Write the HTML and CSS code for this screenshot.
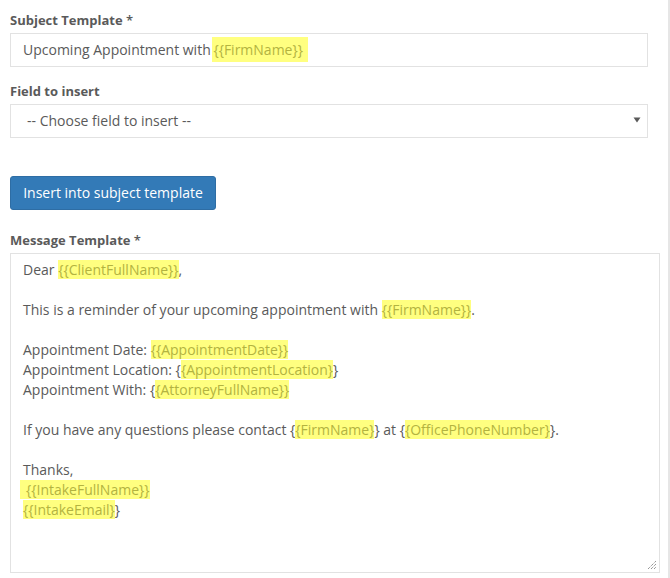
FILE: index.html
```html
<!DOCTYPE html>
<html lang="en">
<head>
<meta charset="utf-8">
<title>Template editor</title>
<link rel="stylesheet" href="styles.css">
</head>
<body>
<div class="page">
  <div class="form-group">
    <label class="label">Subject Template <span class="req">*</span></label>
    <div class="input"><span class="value">Upcoming Appointment with <span class="hl hl-subject">{{FirmName}}</span></span></div>
  </div>
  <div class="form-group">
    <label class="label">Field to insert</label>
    <div class="select">
      <span>-- Choose field to insert --</span>
      <svg class="caret" width="8" height="6" viewBox="0 0 8 6"><path d="M0.5 0.5 H7.5 L4 5.5 Z" fill="#5a5a5a"/></svg>
    </div>
  </div>
  <div class="actions">
    <button class="btn">Insert into subject template</button>
  </div>
  <div class="form-group">
    <label class="label">Message Template <span class="req">*</span></label>
    <div class="textarea">
      <div class="line">Dear <span class="hl">{{ClientFullName}}</span>,</div>
      <div class="line">&nbsp;</div>
      <div class="line">This is a reminder of your upcoming appointment with <span class="hl">{{FirmName}}</span>.</div>
      <div class="line">&nbsp;</div>
      <div class="line">Appointment Date: <span class="hl">{{AppointmentDate}}</span></div>
      <div class="line">Appointment Location: {<span class="hl">{AppointmentLocation}</span>}</div>
      <div class="line">Appointment With: {<span class="hl">{AttorneyFullName}}</span></div>
      <div class="line">&nbsp;</div>
      <div class="line">If you have any questions please contact {<span class="hl">{FirmName}</span>} at {<span class="hl">{OfficePhoneNumber}</span>}.</div>
      <div class="line">&nbsp;</div>
      <div class="line">Thanks,</div>
      <div class="line"><span class="hl hl-lead">{{IntakeFullName}}</span></div>
      <div class="line"><span class="hl">{{IntakeEmail}</span>}</div>
      <svg class="grip" width="10" height="10" viewBox="0 0 10 10"><path d="M1 9 L9 1 M4 9 L9 4 M7 9 L9 7" stroke="#6a6a6a" stroke-width="1" stroke-dasharray="1 1" fill="none"/></svg>
    </div>
  </div>
</div>
</body>
</html>
```

FILE: styles.css
```css
html, body {
  margin: 0;
  padding: 0;
  background: #fff;
}
body {
  font-family: "Open Sans", "Liberation Sans", sans-serif;
  font-size: 14px;
  color: #555;
}
.page {
  width: 658px;
  min-height: 578px;
  padding-left: 10px;
  padding-top: 11px;
  box-sizing: content-box;
  border-right: 2px solid #e6e6e6;
  display: flex;
  flex-direction: column;
}
.form-group {
  display: flex;
  flex-direction: column;
  margin-bottom: 15px;
}
.label {
  font-size: 13px;
  font-weight: 700;
  color: #5a5a5a;
  line-height: 18px;
  margin-bottom: 4px;
}
.req {
  font-weight: 600;
}
.input, .select {
  width: 638px;
  height: 34px;
  box-sizing: border-box;
  border: 1px solid #e2e2e2;
  display: flex;
  align-items: center;
  padding-left: 12px;
  line-height: 20px;
  color: #5a5a5a;
}
.value {
  white-space: pre;
}
.select {
  padding-left: 16px;
  padding-right: 6px;
  justify-content: space-between;
}
.caret {
  display: block;
  margin-top: -2px;
}
.hl {
  background: #ffff80;
  color: #b3b340;
}
.hl-subject {
  padding: 3px 5px 3px 1px;
  margin-left: -2px;
}
.hl-lead {
  margin-left: -3px;
  padding-left: 6px;
}
.actions {
  margin-top: 23px;
  margin-bottom: 21px;
}
.btn {
  font-family: "Open Sans", "Liberation Sans", sans-serif;
  font-size: 14px;
  color: #fff;
  background: #337ab7;
  border: 1px solid #2e6da4;
  border-radius: 3px;
  height: 34px;
  width: 206px;
  padding: 0 12px;
  line-height: 20px;
}
.textarea {
  position: relative;
  width: 650px;
  height: 320px;
  box-sizing: border-box;
  border: 1px solid #e2e2e2;
  padding: 6px 12px;
  line-height: 20px;
  color: #5a5a5a;
}
.line {
  white-space: pre;
  height: 20px;
}
.grip {
  position: absolute;
  right: 2px;
  bottom: 2px;
}
```
